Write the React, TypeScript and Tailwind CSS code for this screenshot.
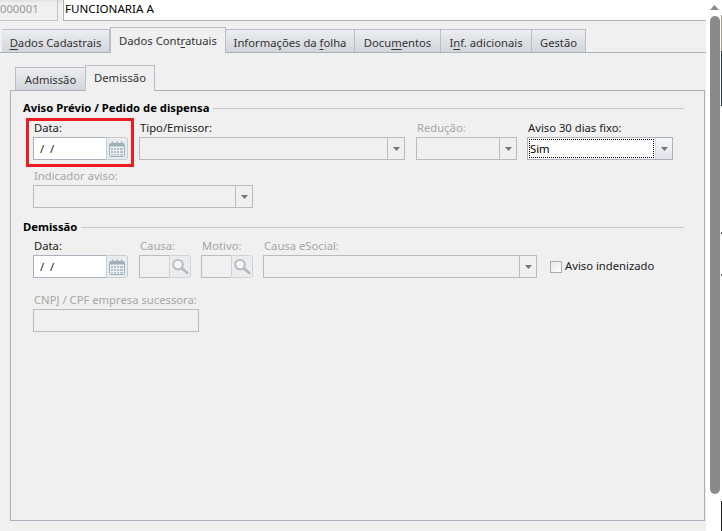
import type { ReactNode } from "react";

function Arrow() {
  return (
    <svg width="7" height="4" viewBox="0 0 7 4">
      <path d="M0 0h7L3.5 4z" fill="#6f7680" />
    </svg>
  );
}

function CalendarIcon() {
  return (
    <svg width="16" height="16" viewBox="0 0 16 16">
      <rect x="0.5" y="2.5" width="15" height="13" rx="1" fill="#eef2f4" stroke="#9db0b8" />
      <rect x="1" y="3" width="14" height="2.5" fill="#9db0b8" />
      <path d="M3.5 0.5v3M8 0.5v3M12.5 0.5v3" stroke="#9db0b8" strokeWidth="1.4" />
      <path
        d="M2 7h2v2H2zM5 7h2v2H5zM8 7h2v2H8zM11 7h3v2h-3zM2 10h2v2H2zM5 10h2v2H5zM8 10h2v2H8zM11 10h3v2h-3zM2 13h2v1.5H2zM5 13h2v1.5H5zM8 13h2v1.5H8zM11 13h3v1.5h-3z"
        fill="#b0bfc6"
      />
    </svg>
  );
}

function SearchIcon() {
  return (
    <svg width="18" height="17" viewBox="0 0 18 17" fill="none">
      <circle cx="7" cy="6.6" r="4.8" fill="#f4f6f7" stroke="#b2babf" strokeWidth="1.8" />
      <path d="M10.8 10.2l5.4 4.8" stroke="#b2babf" strokeWidth="2.6" strokeLinecap="round" />
    </svg>
  );
}

function Field({ label, disabled, className, children }: { label: string; disabled?: boolean; className: string; children: ReactNode }) {
  return (
    <div className={`flex flex-col ${className}`}>
      <div className={`h-[16px] mb-px pl-px leading-[16px] whitespace-nowrap ${disabled ? "text-[#a6a6a6]" : "text-[#1a1a1a]"}`}>{label}</div>
      {children}
    </div>
  );
}

function Combo({ disabled, children }: { disabled?: boolean; children?: ReactNode }) {
  return (
    <div className={`flex h-[23px] border ${disabled ? "border-[#b9bbbe]" : "border-[#abb0bc] bg-white"}`}>
      <div className="flex-1 min-w-0 p-px">{children}</div>
      <div className={`w-[17px] flex items-center justify-center border-l ${disabled ? "border-[#b9bbbe]" : "border-[#d5d9de] bg-gradient-to-b from-[#f6f8fa] to-[#dfe5ea]"}`}>
        <Arrow />
      </div>
    </div>
  );
}

function DateInput() {
  return (
    <div className="flex h-[23px]">
      <div className="flex-1 bg-white border border-r-0 border-[#abb0bc] pl-[6px] leading-[21px] text-[#1a1a1a]">/ &nbsp;/</div>
      <div className="w-[22px] flex items-center justify-center border border-[#c7ccd1] rounded-r-[3px] bg-[#e9edef]">
        <CalendarIcon />
      </div>
    </div>
  );
}

function Lookup() {
  return (
    <div className="flex h-[23px]">
      <div className="flex-1 border border-r-0 border-[#b9bbbe]" />
      <div className="w-[22px] flex items-center justify-center border border-[#d0d3d6] rounded-r-[3px] bg-[#eaecee]">
        <SearchIcon />
      </div>
    </div>
  );
}

function Heading({ children }: { children: string }) {
  return (
    <div className="flex items-center gap-[4px] h-[16px] mr-[20px]">
      <span className="font-bold text-black whitespace-nowrap leading-[16px]">{children}</span>
      <div className="flex-1 h-px bg-[#c9c9c9]" />
    </div>
  );
}

function OuterTab({ active, className, children }: { active?: boolean; className: string; children: ReactNode }) {
  if (active) {
    return (
      <div className={`relative z-10 h-[26px] -mb-px border border-b-0 border-[#b9bdc9] bg-[#f0f0f0] text-center leading-[25px] text-[#333] ${className}`}>
        {children}
      </div>
    );
  }
  return (
    <div className={`h-[23px] border border-l-0 border-b-0 border-[#b9bdc9] bg-gradient-to-b from-[#eceef0] to-[#d2d5da] text-center leading-[25px] text-[#333] ${className}`}>
      {children}
    </div>
  );
}

export default function App() {
  return (
    <div className="relative w-[722px] h-[531px] overflow-hidden flex bg-white text-[11.25px] font-['Noto_Sans',sans-serif]">
      <div className="w-[706px] shrink-0 bg-[#f0f0f0]">
        {/* Employee header */}
        <div className="flex h-[21px] gap-[5px] shadow-[inset_0_2px_2px_rgba(0,0,0,0.05)]">
          <div className="w-[58px] border-r border-b border-[#c4c4c4] leading-[17px] text-[#9a9a9a]">000001</div>
          <div className="flex-1 bg-white border-l border-b border-[#abb0bc] pl-[1px] text-[11.6px] leading-[17px] text-black">FUNCIONARIA A</div>
        </div>

        {/* Main tabs */}
        <div className="flex items-end pl-[2px] mt-[6px] h-[25px]">
          <OuterTab className="w-[108px] border-l border-l-[#b9bdc9]"><u className="underline-offset-2">D</u>ados Cadastrais</OuterTab>
          <OuterTab active className="w-[116px]">Dados Cont<u className="underline-offset-2">r</u>atuais</OuterTab>
          <OuterTab className="w-[129px]">Informações da <u className="underline-offset-2">f</u>olha</OuterTab>
          <OuterTab className="w-[86px]">Docu<u className="underline-offset-2">m</u>entos</OuterTab>
          <OuterTab className="w-[91px]">I<u className="underline-offset-2">n</u>f. adicionais</OuterTab>
          <OuterTab className="w-[54px]">Gestão</OuterTab>
        </div>

        <div className="border-t border-[#abb0bc] pt-[12px] pl-[10px] pr-px">
          {/* Inner tabs */}
          <div className="flex items-end pl-[5px] h-[25px]">
            <div className="w-[70px] h-[23px] border border-r-0 border-b-0 border-[#b9bdc9] bg-gradient-to-b from-[#eceef0] to-[#d2d5da] text-center leading-[23px] text-[#333]">Admissão</div>
            <div className="relative z-10 w-[70px] h-[26px] -mb-px border border-b-0 border-[#b9bdc9] bg-[#f0f0f0] text-center leading-[24px] text-[#333]">Demissão</div>
          </div>

          {/* Form */}
          <div className="h-[431px] border border-[#abb0bc] pt-[9px] pl-[12px]">
            <Heading>Aviso Prévio / Pedido de dispensa</Heading>

            <div className="flex mt-[4px] ml-[10px]">
              <Field label="Data:" className="w-[95px]"><DateInput /></Field>
              <Field label="Tipo/Emissor:" className="w-[266px] ml-[11px]"><Combo disabled /></Field>
              <Field label="Redução:" disabled className="w-[101px] ml-[11px]"><Combo disabled /></Field>
              <Field label="Aviso 30 dias fixo:" className="w-[146px] ml-[10px]">
                <Combo>
                  <div className="h-full border border-dotted border-black leading-[17px] text-black">Sim</div>
                </Combo>
              </Field>
            </div>

            <Field label="Indicador aviso:" disabled className="w-[220px] ml-[10px] mt-[8px]"><Combo disabled /></Field>

            <div className="mt-[11px]">
              <Heading>Demissão</Heading>
            </div>

            <div className="flex mt-[3px] ml-[10px]">
              <Field label="Data:" className="w-[95px]"><DateInput /></Field>
              <Field label="Causa:" disabled className="w-[52px] ml-[11px]"><Lookup /></Field>
              <Field label="Motivo:" disabled className="w-[52px] ml-[10px]"><Lookup /></Field>
              <Field label="Causa eSocial:" disabled className="w-[274px] ml-[10px]"><Combo disabled /></Field>
              <div className="flex items-center self-end h-[23px] ml-[13px] gap-[3px]">
                <div className="w-[12px] h-[12px] border border-[#a9adb3] bg-gradient-to-br from-[#e6e8ea] to-white" />
                <span className="text-[#1a1a1a]">Aviso indenizado</span>
              </div>
            </div>

            <Field label="CNPJ / CPF empresa sucessora:" disabled className="w-[166px] ml-[10px] mt-[14px]">
              <div className="h-[23px] border border-[#b9bbbe]" />
            </Field>
          </div>
        </div>
      </div>

      {/* Scrollbar */}
      <div className="w-[15px] shrink-0 flex flex-col items-center pl-[2px] pt-[5px]">
        <svg width="9" height="5" viewBox="0 0 9 5"><path d="M0 5L4.5 0 9 5z" fill="#8c8c8c" /></svg>
        <div className="w-[10px] h-[478px] mt-[6px] rounded-full bg-[#8a8a8a]" />
      </div>

      {/* Edge of the window behind */}
      <div className="w-px shrink-0 flex flex-col">
        <div className="h-[15px]" />
        <div className="h-[36px] bg-[#a8a08c]" />
        <div className="h-[55px] bg-[#27384e]" />
        <div className="h-[126px]" />
        <div className="h-[2px] bg-[#555]" />
        <div className="h-[40px]" />
        <div className="h-[2px] bg-[#555]" />
        <div className="h-[225px]" />
        <div className="flex-1 bg-[#222]" />
      </div>

      {/* Highlight around the date field */}
      <div className="absolute left-[26px] top-[118px] w-[108px] h-[49px] border-[3px] border-[#ed1c24]" />
    </div>
  );
}
